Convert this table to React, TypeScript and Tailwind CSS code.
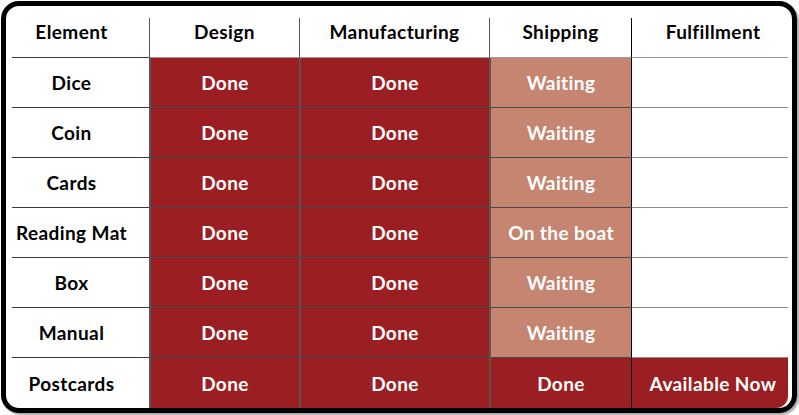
import React from 'react';

type Status = 'done' | 'wait' | 'none';

const COLUMNS = ['Element', 'Design', 'Manufacturing', 'Shipping', 'Fulfillment'];

const ROWS: { label: string; cells: { text: string; status: Status }[] }[] = [
  { label: 'Dice', cells: [{ text: 'Done', status: 'done' }, { text: 'Done', status: 'done' }, { text: 'Waiting', status: 'wait' }, { text: '', status: 'none' }] },
  { label: 'Coin', cells: [{ text: 'Done', status: 'done' }, { text: 'Done', status: 'done' }, { text: 'Waiting', status: 'wait' }, { text: '', status: 'none' }] },
  { label: 'Cards', cells: [{ text: 'Done', status: 'done' }, { text: 'Done', status: 'done' }, { text: 'Waiting', status: 'wait' }, { text: '', status: 'none' }] },
  { label: 'Reading Mat', cells: [{ text: 'Done', status: 'done' }, { text: 'Done', status: 'done' }, { text: 'On the boat', status: 'wait' }, { text: '', status: 'none' }] },
  { label: 'Box', cells: [{ text: 'Done', status: 'done' }, { text: 'Done', status: 'done' }, { text: 'Waiting', status: 'wait' }, { text: '', status: 'none' }] },
  { label: 'Manual', cells: [{ text: 'Done', status: 'done' }, { text: 'Done', status: 'done' }, { text: 'Waiting', status: 'wait' }, { text: '', status: 'none' }] },
  { label: 'Postcards', cells: [{ text: 'Done', status: 'done' }, { text: 'Done', status: 'done' }, { text: 'Done', status: 'done' }, { text: 'Available Now', status: 'done' }] },
];

const statusBg: Record<Status, string> = {
  done: 'bg-[#9b1f22] text-white',
  wait: 'bg-[#c58571] text-white',
  none: 'bg-white',
};

export default function App() {
  return (
    <div className="w-[799px] h-[415px] bg-white pt-px pl-px font-['Lato','Open_Sans',sans-serif] font-bold text-[19px] tracking-[0.4px]">
      <div className="w-[796px] h-[412px] border-[5px] border-black rounded-[18px] pt-[12px] pl-[6px] shadow-[2px_2px_2px_rgba(0,0,0,0.35)] overflow-hidden">
        <div className="grid grid-cols-[137px_150px_190px_142px_157px] grid-rows-[40px_repeat(7,50px)]">
          {/* Cabecera */}
          {COLUMNS.map((col, i) => (
            <div
              key={col}
              className={`flex justify-center pt-[2px] leading-[24px] text-black border-b ${
                i === 0 ? 'pr-[18px] border-[#3a3a3a]' : 'border-l border-l-[#555] border-b-[#9a9a9a]'
              } ${i === 4 ? 'border-l-black pl-[6px]' : ''}`}
            >
              {col}
            </div>
          ))}

          {/* Filas */}
          {ROWS.map((row, r) => (
            <React.Fragment key={row.label}>
              <div
                className={`flex items-center justify-center pr-[18px] pt-[2px] text-black whitespace-nowrap ${
                  r < ROWS.length - 1 ? 'border-b border-[#3a3a3a]' : ''
                }`}
              >
                {row.label}
              </div>
              {row.cells.map((cell, c) => (
                <div
                  key={c}
                  className={`flex items-center justify-center pt-[2px] whitespace-nowrap ${statusBg[cell.status]} ${
                    c === 3 ? 'border-l border-l-black pl-[6px]' : 'border-l-2 border-l-[#5e5450]'
                  } ${c === 0 ? 'border-l border-l-[#555]' : ''} ${
                    r < ROWS.length - 1 ? (c === 3 ? 'border-b border-b-[#8a8a8a]' : 'border-b border-b-[#4a4a4a]') : ''
                  } ${r === ROWS.length - 1 && c === 3 ? 'rounded-br-[12px]' : ''}`}
                >
                  {cell.text}
                </div>
              ))}
            </React.Fragment>
          ))}
        </div>
      </div>
    </div>
  );
}
